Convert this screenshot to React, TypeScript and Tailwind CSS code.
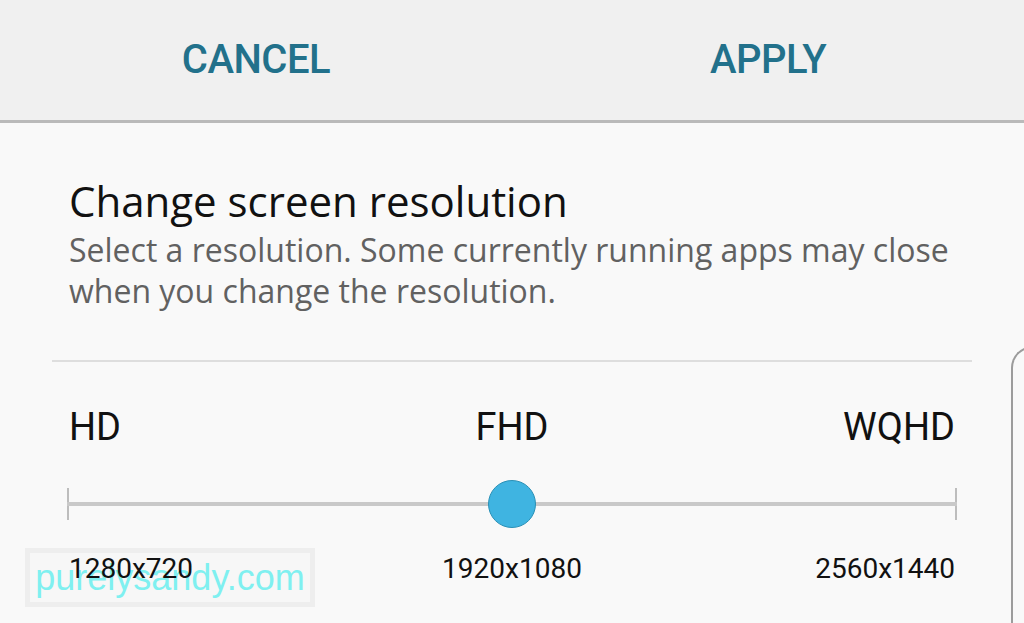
import React from 'react';

const sans = { fontFamily: '"Open Sans", "Noto Sans", sans-serif' };
const roboto = { fontFamily: 'Roboto, "Noto Sans", sans-serif' };

export default function App() {
  return (
    <div className="relative h-[623px] w-[1024px] overflow-hidden bg-[#f9f9f9]">
      {/* Action bar */}
      <div className="flex h-[123px] items-center border-b-[3px] border-[#bababa] bg-[#f0f0f0]" style={roboto}>
        <button className="flex-1 text-center text-[40px] font-medium tracking-[-0.5px] text-[#22718b]">CANCEL</button>
        <button className="flex-1 text-center text-[40px] font-medium tracking-[-0.5px] text-[#22718b]">APPLY</button>
      </div>

      {/* Dialog body */}
      <div className="pt-[51px]">
        <div className="px-[69px]" style={sans}>
          <h1 className="text-[42px] leading-[54px] text-[#111111]">Change screen resolution</h1>
          <p className="mt-[1px] text-[32px] leading-[41px] text-[#616161]">
            Select a resolution. Some currently running apps may close
            <br />
            when you change the resolution.
          </p>
        </div>

        <div className="mx-[52px] mt-[49px] h-[2px] bg-[#dedede]" />

        {/* Labels */}
        <div className="mt-[42px] grid grid-cols-3 px-[69px] text-[38px] leading-[46px] text-[#111111]" style={roboto}>
          <span className="text-left">HD</span>
          <span className="text-center">FHD</span>
          <span className="text-right">WQHD</span>
        </div>

        {/* Slider */}
        <div className="relative mx-[67px] mt-[30px] h-[48px]">
          <div className="absolute left-0 top-[8px] h-[32px] w-[2px] bg-[#bdbdbd]" />
          <div className="absolute right-0 top-[8px] h-[32px] w-[2px] bg-[#bdbdbd]" />
          <div className="absolute left-0 right-0 top-[22px] h-[4px] bg-[#c9c9c9]" />
          <div className="absolute left-1/2 top-0 h-[48px] w-[48px] -translate-x-1/2 rounded-full border border-[#2a90b6] bg-[#3fb4e1]" />
        </div>

        {/* Values */}
        <div className="relative z-10 mt-[23px] grid grid-cols-3 px-[69px] text-[28px] leading-[36px] text-[#111111]" style={roboto}>
          <span className="text-left">1280x720</span>
          <span className="text-center">1920x1080</span>
          <span className="text-right">2560x1440</span>
        </div>
      </div>

      {/* Watermark */}
      <div className="absolute left-[25px] top-[548px] flex h-[59px] w-[290px] items-center justify-center border-[5px] border-[#eeeeee] bg-[#f7f7f7]">
        <span className="text-[36px] leading-none text-[#7ff0f0]" style={{ fontFamily: '"Liberation Sans", Arial, sans-serif' }}>
          purelysandy.com
        </span>
      </div>

      {/* Edge of the window behind */}
      <div className="absolute left-[1011px] top-[346px] h-[300px] w-[40px] rounded-tl-[22px] border-l-2 border-t-2 border-[#9c9c9c]" />
    </div>
  );
}
